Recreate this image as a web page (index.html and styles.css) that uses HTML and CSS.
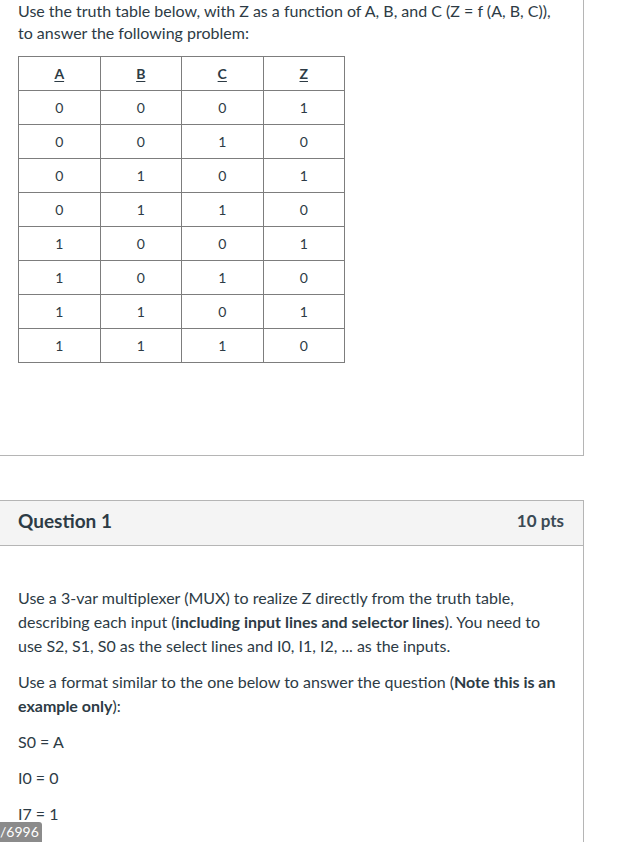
FILE: index.html
```html
<!DOCTYPE html>
<html>
<head>
<meta charset="utf-8">
<link rel="stylesheet" href="styles.css">
</head>
<body>
<div class="card intro">
  <p class="lead">Use the truth table below, with Z as a function of A, B, and C (Z = f (A, B, C)), to answer the following problem:</p>
  <table class="truth">
    <thead>
      <tr><th><u>A</u></th><th><u>B</u></th><th><u>C</u></th><th><u>Z</u></th></tr>
    </thead>
    <tbody>
      <tr><td>0</td><td>0</td><td>0</td><td>1</td></tr>
      <tr><td>0</td><td>0</td><td>1</td><td>0</td></tr>
      <tr><td>0</td><td>1</td><td>0</td><td>1</td></tr>
      <tr><td>0</td><td>1</td><td>1</td><td>0</td></tr>
      <tr><td>1</td><td>0</td><td>0</td><td>1</td></tr>
      <tr><td>1</td><td>0</td><td>1</td><td>0</td></tr>
      <tr><td>1</td><td>1</td><td>0</td><td>1</td></tr>
      <tr><td>1</td><td>1</td><td>1</td><td>0</td></tr>
    </tbody>
  </table>
</div>

<div class="card question">
  <div class="q-header">
    <span class="q-title">Question 1</span>
    <span class="q-pts">10 pts</span>
  </div>
  <div class="q-body">
    <p>Use a 3-var multiplexer (MUX) to realize Z directly from the truth table, describing each input (<b>including input lines and selector lines</b>). You need to use S2, S1, S0 as the select lines and I0, I1, I2, ... as the inputs.</p>
    <p>Use a format similar to the one below to answer the question (<b>Note this is an example only</b>):</p>
    <p>S0 = A</p>
    <p>I0 = 0</p>
    <p>I7 = 1</p>
  </div>
</div>

<div class="badge">/6996</div>
</body>
</html>
```
FILE: styles.css
```css
html, body {
  margin: 0;
  padding: 0;
  background: #fff;
}
body {
  font-family: Lato, "Open Sans", sans-serif;
  color: #2d3b45;
  font-size: 16px;
  overflow: hidden;
}
.card {
  box-sizing: border-box;
  width: 585px;
  margin-left: -1px;
  border: 1px solid #b5b5b5;
}
.intro {
  border-top: none;
  padding: 0 18px 92px 18px;
}
.lead {
  margin: 0;
  line-height: 22px;
  width: 540px;
}
.truth {
  margin-top: 12px;
  border-collapse: collapse;
  border: 1px solid #333;
  width: 327px;
  table-layout: fixed;
}
.truth th, .truth td {
  border: 1px solid #7d7d7d;
  height: 33px;
  padding: 0;
  text-align: center;
  font-size: 14px;
  font-weight: 400;
}
.truth th {
  font-weight: 700;
}
.truth th u {
  text-decoration-thickness: 1px;
  text-underline-offset: 2px;
}
.question {
  margin-top: 44px;
  border-bottom: none;
}
.q-header {
  box-sizing: border-box;
  display: flex;
  justify-content: space-between;
  align-items: center;
  background: #f4f4f4;
  border-bottom: 1px solid #b5b5b5;
  height: 45px;
  padding: 0 19px 5px 18px;
}
.q-title {
  font-size: 19px;
  font-weight: 700;
}
.q-pts {
  font-size: 17px;
  font-weight: 700;
  color: #3b4a55;
}
.q-body {
  padding: 40px 18px 60px 18px;
}
.q-body p {
  margin: 0 0 12px;
  line-height: 24px;
  width: 545px;
}
.q-body b {
  font-weight: 700;
}
.badge {
  position: fixed;
  left: 0;
  bottom: 0;
  background: #8b8b8b;
  color: #fff;
  font-size: 14px;
  line-height: 20px;
  padding: 0 3px 0 0;
  border-top-right-radius: 3px;
}
```
